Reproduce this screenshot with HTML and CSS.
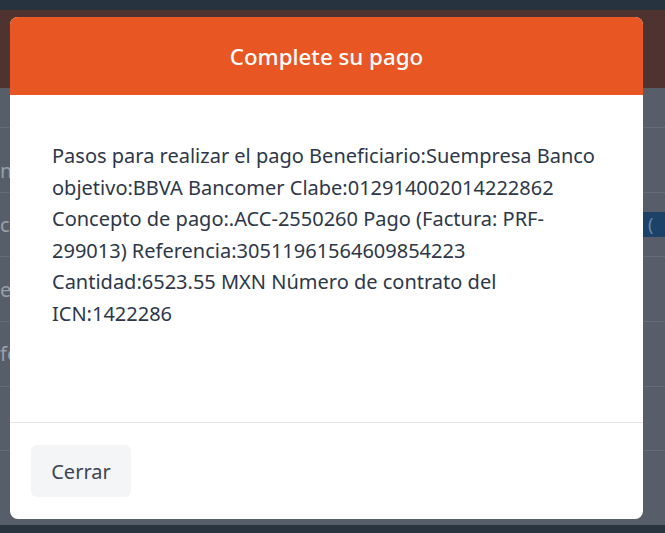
FILE: index.html
```html
<!DOCTYPE html>
<html lang="es">
<head>
<meta charset="utf-8">
<title>Complete su pago</title>
<link rel="stylesheet" href="styles.css">
</head>
<body>
<div class="page">
  <div class="topbar"></div>
  <div class="band"></div>
  <div class="content">
    <div class="row row-head"></div>
    <div class="row row-first"><span class="cell">n</span></div>
    <div class="row"><span class="cell">c</span><span class="chip">(</span></div>
    <div class="row"><span class="cell">e</span></div>
    <div class="row"><span class="cell">fe</span></div>
    <div class="row"></div>
  </div>
  <div class="bottombar"></div>
</div>

<div class="modal" role="dialog" aria-labelledby="modal-title">
  <header class="modal-header">
    <h2 id="modal-title" class="modal-title">Complete su pago</h2>
  </header>
  <div class="modal-body">
    <p class="modal-text">Pasos para realizar el pago Beneficiario:Suempresa Banco objetivo:BBVA Bancomer Clabe:012914002014222862 Concepto de pago:.ACC-2550260 Pago (Factura: PRF-299013) Referencia:30511961564609854223 Cantidad:6523.55 MXN Número de contrato del ICN:1422286</p>
  </div>
  <footer class="modal-footer">
    <button class="btn-close" type="button">Cerrar</button>
  </footer>
</div>
</body>
</html>
```

FILE: styles.css
```css
* { box-sizing: border-box; }
html, body { margin: 0; padding: 0; }
body {
  width: 665px;
  height: 533px;
  overflow: hidden;
  background: #575e69;
  font-family: "Noto Sans", "Open Sans", sans-serif;
  position: relative;
}
.page {
  display: flex;
  flex-direction: column;
  height: 533px;
}
.topbar { height: 10px; background: #27333f; flex: none; }
.band { height: 78px; background: #4f3331; flex: none; }
.content { flex: 1; background: #575e69; }
.bottombar { height: 8px; background: #283440; flex: none; }
.row {
  height: 64.7px;
  border-bottom: 1px solid #646b75;
  display: flex;
  align-items: center;
  justify-content: space-between;
  overflow: hidden;
}
.row-head { height: 40px; }
.row-first { align-items: flex-end; padding-bottom: 8px; }
.cell {
  color: #9aa0a8;
  font-size: 20px;
  white-space: nowrap;
  max-width: 10px;
  overflow: hidden;
}
.chip {
  margin-left: auto;
  width: 22px;
  height: 25px;
  background: #1c4268;
  color: #6a88a6;
  font-size: 18px;
  line-height: 25px;
  padding-left: 5px;
}
.modal {
  position: absolute;
  left: 10px;
  top: 17px;
  width: 633px;
  height: 502px;
  background: #ffffff;
  border-radius: 8px;
  overflow: hidden;
  display: flex;
  flex-direction: column;
}
.modal-header {
  height: 78px;
  flex: none;
  background: #e85624;
  display: flex;
  align-items: center;
  justify-content: center;
}
.modal-title {
  margin: 0;
  color: #ffffff;
  font-size: 22.3px;
  font-weight: 500;
}
.modal-body {
  flex: 1;
  padding: 45px 42px 0 42px;
  border-bottom: 1px solid #e2e5e9;
}
.modal-text {
  margin: 0;
  color: #2d3748;
  font-size: 20px;
  line-height: 31.6px;
}
.modal-footer {
  height: 96px;
  flex: none;
  display: flex;
  align-items: center;
  padding-left: 21px;
}
.btn-close {
  width: 100px;
  height: 52px;
  border: none;
  border-radius: 6px;
  background: #f4f5f7;
  color: #3d4451;
  font-family: inherit;
  font-size: 20px;
  padding: 0;
}
```
